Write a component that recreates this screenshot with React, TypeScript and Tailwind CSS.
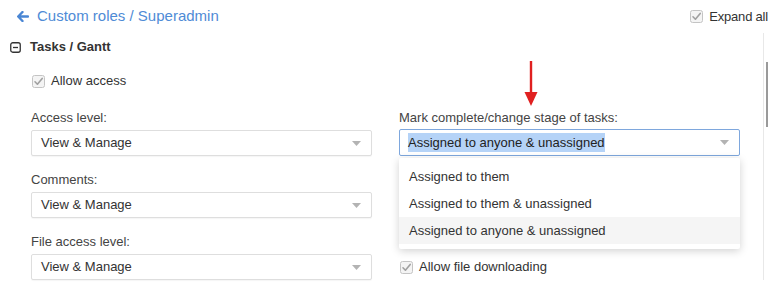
import React from "react";

function CheckBox() {
  return (
    <svg width="13" height="13" viewBox="0 0 13 13" className="shrink-0">
      <rect x="0.5" y="0.5" width="12" height="12" rx="2" fill="#f4f4f4" stroke="#c4c4c4" />
      <path d="M3 6.8 L5.4 9.2 L10.2 3.4" fill="none" stroke="#a0a0a0" strokeWidth="1.6" strokeLinecap="round" strokeLinejoin="round" />
    </svg>
  );
}

function Caret() {
  return (
    <svg width="9" height="5" viewBox="0 0 9 5" className="shrink-0">
      <path d="M0 0 L9 0 L4.5 5 Z" fill="#b3b3b3" />
    </svg>
  );
}

function Select({ value }: { value: string }) {
  return (
    <div className="flex h-[26px] items-center justify-between rounded-[2px] border border-[#dedede] bg-white pl-[9px] pr-[10px] shadow-[0_1px_1px_rgba(0,0,0,0.04)]">
      <span className="text-[13px] text-[#333]">{value}</span>
      <Caret />
    </div>
  );
}

function Field({ label, value }: { label: string; value: string }) {
  return (
    <div className="flex flex-col">
      <div className="h-[16px] text-[13px] leading-[16px] text-[#444]">{label}</div>
      <div className="mt-[4px]">
        <Select value={value} />
      </div>
    </div>
  );
}

const options = [
  "Assigned to them",
  "Assigned to them & unassigned",
  "Assigned to anyone & unassigned",
];

export default function App() {
  return (
    <div
      className="relative h-[283px] w-[768px] overflow-hidden bg-white text-[#333]"
      style={{ fontFamily: '"Liberation Sans", Arial, sans-serif' }}
    >
      {/* header */}
      <div className="flex h-[33px] items-center justify-between pl-[17px]">
        <div className="flex items-center gap-[8px] text-[#4f8bd6]">
          <svg width="12" height="11" viewBox="0 0 12 11">
            <path d="M5.5 1 L1.2 5.5 L5.5 10 M1.5 5.5 L11 5.5" fill="none" stroke="#4a86d4" strokeWidth="2.4" strokeLinecap="round" strokeLinejoin="round" />
          </svg>
          <span className="text-[15px]">Custom roles / Superadmin</span>
        </div>
        <div className="flex items-center gap-[6px] whitespace-nowrap">
          <CheckBox />
          <span className="text-[13px] tracking-[-0.2px] text-[#333]">Expand all</span>
        </div>
      </div>

      <div className="flex">
        <div className="flex-1">
          {/* section title */}
          <div className="flex h-[28px] items-center gap-[9px] pl-[10px]">
            <svg width="11" height="11" viewBox="0 0 11 11">
              <rect x="0.75" y="0.75" width="9.5" height="9.5" rx="2" fill="none" stroke="#333" strokeWidth="1.3" />
              <path d="M3 5.5 L8 5.5" stroke="#333" strokeWidth="1.3" />
            </svg>
            <span className="text-[13px] font-bold text-[#333]">Tasks / Gantt</span>
          </div>

          <div className="pl-[32px] pt-[12px]">
            <div className="flex h-[16px] items-center gap-[6px]">
              <CheckBox />
              <span className="text-[13px] text-[#333]">Allow access</span>
            </div>
          </div>

          <div className="relative mt-[21px] grid grid-cols-2 gap-x-[27px] gap-y-[16px] pl-[31px] pr-[23px]">
            <Field label="Access level:" value="View & Manage" />

            <div className="flex flex-col">
              <div className="h-[16px] text-[13px] leading-[16px] text-[#444]">
                Mark complete/change stage of tasks:
              </div>
              <div className="relative mt-[3px]">
                <div className="flex h-[27px] items-center justify-between rounded-[2px] border border-[#7ea7dd] bg-white pl-[8px] pr-[10px]">
                  <span className="bg-[#b5d3f7] text-[13px] text-[#222]">Assigned to anyone &amp; unassigned</span>
                  <Caret />
                </div>
                <div className="absolute left-0 right-0 top-[29px] z-10 rounded-[2px] bg-white py-[5px] shadow-[0_2px_8px_rgba(0,0,0,0.18)]">
                  {options.map((o, i) => (
                    <div
                      key={o}
                      className={`flex h-[27px] items-center px-[10px] text-[13px] text-[#333] ${
                        i === 2 ? "bg-[#f5f5f5]" : ""
                      }`}
                    >
                      {o}
                    </div>
                  ))}
                </div>
              </div>
            </div>

            <Field label="Comments:" value="View & Manage" />
            <div />

            <Field label="File access level:" value="View & Manage" />
            <div className="flex items-end">
              <div className="flex h-[26px] items-center gap-[6px] pl-[1px]">
                <CheckBox />
                <span className="text-[13px] text-[#333]">Allow file downloading</span>
              </div>
            </div>
          </div>
        </div>

        {/* scrollbar strip */}
        <div className="relative w-[5px] border-l border-[#e8e8e8]">
          <div className="absolute right-0 top-[29px] h-[65px] w-[2px] bg-[#9a9a9a]" />
        </div>
      </div>

      {/* annotation arrow */}
      <svg className="absolute left-[523px] top-[61px]" width="16" height="46" viewBox="0 0 16 46">
        <path d="M8 0 L8 34" stroke="#e02020" strokeWidth="2.4" />
        <path d="M1.5 31 L14.5 31 L8 45 Z" fill="#e02020" />
      </svg>
    </div>
  );
}
